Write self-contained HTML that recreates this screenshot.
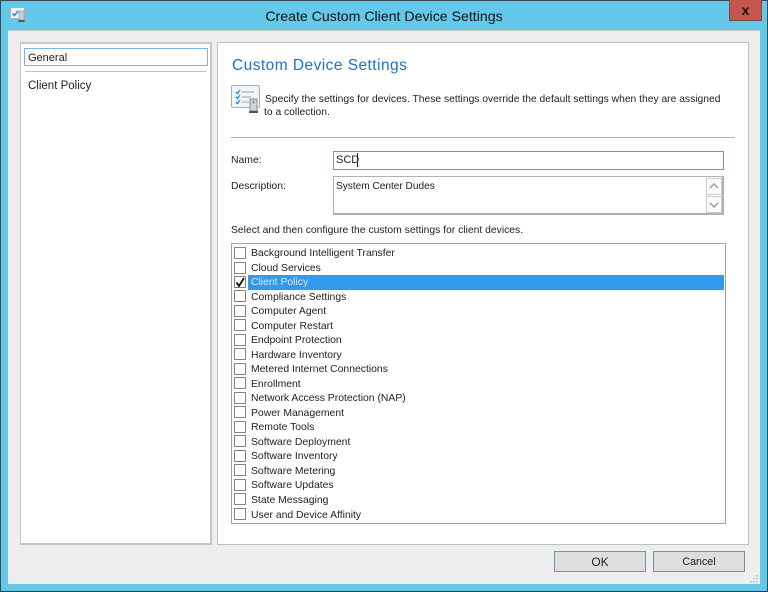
<!DOCTYPE html>
<html><head><meta charset="utf-8"><style>
html,body{margin:0;padding:0}
body{width:768px;height:592px;overflow:hidden;position:relative;background:#64c8ea;font-family:"Liberation Sans",sans-serif;font-size:10.4px;color:#222}
div,span{position:absolute;box-sizing:border-box;white-space:nowrap}
.t{line-height:14px;height:14px}
.cb{left:234px;width:12px;height:12px;margin-top:1px;background:#fff;border:1px solid #858585}
.l{left:251px;line-height:14px;height:14px;margin-top:2px}
</style></head><body>
<div style="left:0;top:0;width:768px;height:1px;background:#3a4a50"></div>
<div style="left:0;top:591px;width:768px;height:1px;background:#2e3c42"></div>
<div style="left:0;top:0;width:1px;height:592px;background:#3a4a50"></div>
<div style="left:767px;top:0;width:1px;height:592px;background:#3a4a50"></div>
<svg style="position:absolute;left:9px;top:6px" width="18" height="18" viewBox="0 0 18 18"><rect x="1.500" y="1.500" width="14" height="11" rx="1" fill="#f1f5f7" stroke="#a9b4ba"/><path d="M3.500 7.500l2 2 3.500-4.500" fill="none" stroke="#2f8fe0" stroke-width="1.600"/><rect x="10" y="5" width="5" height="9" fill="#c9cfd2" stroke="#8d9599" stroke-width=".7"/><rect x="9.500" y="14" width="6" height="2" fill="#555"/></svg>
<div style="left:0;width:768px;top:8px;text-align:center;font-size:14.150px;line-height:16px;color:#111">Create Custom Client Device Settings</div>
<div style="left:729px;top:0;width:33px;height:21px;background:#c4574c;border:1px solid #7e4a46;border-top:0;text-align:center;font-weight:bold;font-size:14px;line-height:20px;color:#111">x</div>
<div style="left:8px;top:30px;width:752px;height:554px;background:#eee;border-top:1px solid #ccc"></div>
<div style="left:20px;top:42px;width:192px;height:503px;background:#fff;border:2px solid #c6c6c6;border-width:2px 2px 2px 1px"></div>
<div style="left:24px;top:48px;width:184px;height:18px;border:1px solid #7db4ea"></div>
<div class="t" style="left:28px;top:51px;font-size:11px">General</div>
<div style="left:25px;top:71px;width:181px;height:1px;background:#c4c4c4"></div>
<div class="t" style="left:28px;top:79px;font-size:11.500px">Client Policy</div>
<div style="left:217px;top:42px;width:532px;height:503px;background:#fff;border:1px solid #c0c0c0"></div>
<div style="left:232px;top:56px;font-size:15.500px;line-height:19px;color:#1f72c8;letter-spacing:.45px">Custom Device Settings</div>
<svg style="position:absolute;left:231px;top:85px" width="30" height="30" viewBox="0 0 30 30"><rect x=".5" y=".5" width="28" height="22" rx="1.500" fill="#f2f5f7" stroke="#a5aeb3"/><path d="M5 7l1.500 1.500L9 5M5 12l1.500 1.500L9 10M5 17l1.500 1.500L9 15" fill="none" stroke="#2f90e0" stroke-width="1.400"/><path d="M11 7h12M11 12h9M11 17h7" stroke="#9aa3a8"/><rect x="19" y="14" width="7" height="12" fill="#cfd5d8" stroke="#70787c" stroke-width=".8"/><rect x="21.500" y="15.500" width="2" height="3" fill="#6fb13f"/><rect x="18" y="26" width="9" height="2" fill="#555"/></svg>
<div class="t" style="left:265px;top:93px;font-size:10.300px">Specify the settings for devices. These settings override the default settings when they are assigned</div>
<div class="t" style="left:264px;top:106px;font-size:10.300px">to a collection.</div>
<div style="left:231px;top:137px;width:504px;height:1px;background:#b5b5b5"></div>
<div class="t" style="left:231px;top:154px">Name:</div>
<div style="left:333px;top:151px;width:391px;height:19px;border:1px solid #6f97b8"></div>
<div class="t" style="left:336px;top:153px;font-size:11px">SCD</div>
<div style="left:357px;top:153px;width:1px;height:14px;background:#222"></div>
<div class="t" style="left:231px;top:180px">Description:</div>
<div style="left:333px;top:176px;width:391px;height:39px;border:1px solid #b0b0b0;border-bottom-width:2px;border-right-width:2px"></div>
<div class="t" style="left:336px;top:180px;font-size:10.100px">System Center Dudes</div>
<div style="left:706px;top:178px;width:16px;height:17px;border:1px solid #ccc;background:#fbfbfb"></div>
<div style="left:706px;top:196px;width:16px;height:17px;border:1px solid #ccc;background:#fbfbfb"></div>
<svg style="position:absolute;left:706px;top:178px" width="16" height="35" fill="none" stroke="#999" stroke-width="1.400"><path d="M4 10l4-4 4 4M4 25l4 4 4-4"/></svg>
<div class="t" style="left:231px;top:224px;font-size:10.350px">Select and then configure the custom settings for client devices.</div>
<div style="left:231px;top:243px;width:495px;height:281px;border:1px solid #a0a0a8"></div>
<div style="left:248px;top:275px;width:476px;height:15px;background:#3399ea"></div>
<div class="cb" style="top:246px"></div><div class="l" style="top:245px">Background Intelligent Transfer</div>
<div class="cb" style="top:261px"></div><div class="l" style="top:260px">Cloud Services</div>
<div class="cb" style="top:275px"></div><div class="l" style="top:274px;color:#d5ebfb">Client Policy</div>
<svg style="position:absolute;left:234px;top:276px" width="12" height="13"><path d="M2.500 6.500l2.500 3.500 5-8" fill="none" stroke="#111" stroke-width="1.800"/></svg>
<div class="cb" style="top:289px"></div><div class="l" style="top:289px">Compliance Settings</div>
<div class="cb" style="top:304px"></div><div class="l" style="top:303px">Computer Agent</div>
<div class="cb" style="top:318px"></div><div class="l" style="top:318px">Computer Restart</div>
<div class="cb" style="top:333px"></div><div class="l" style="top:332px">Endpoint Protection</div>
<div class="cb" style="top:347px"></div><div class="l" style="top:347px">Hardware Inventory</div>
<div class="cb" style="top:362px"></div><div class="l" style="top:361px">Metered Internet Connections</div>
<div class="cb" style="top:376px"></div><div class="l" style="top:376px">Enrollment</div>
<div class="cb" style="top:391px"></div><div class="l" style="top:390px">Network Access Protection (NAP)</div>
<div class="cb" style="top:405px"></div><div class="l" style="top:405px">Power Management</div>
<div class="cb" style="top:420px"></div><div class="l" style="top:419px">Remote Tools</div>
<div class="cb" style="top:434px"></div><div class="l" style="top:434px">Software Deployment</div>
<div class="cb" style="top:449px"></div><div class="l" style="top:448px">Software Inventory</div>
<div class="cb" style="top:463px"></div><div class="l" style="top:463px">Software Metering</div>
<div class="cb" style="top:478px"></div><div class="l" style="top:477px">Software Updates</div>
<div class="cb" style="top:492px"></div><div class="l" style="top:492px">State Messaging</div>
<div class="cb" style="top:507px"></div><div class="l" style="top:507px">User and Device Affinity</div>
<div style="left:554px;top:551px;width:92px;height:21px;background:#dedede;border:1px solid #5f9cc5;text-align:center;font-size:12px;line-height:20px">OK</div>
<div style="left:653px;top:551px;width:92px;height:21px;background:#dedede;border:1px solid #8a8a8a;text-align:center;font-size:10.700px;line-height:20px">Cancel</div>
<svg style="position:absolute;left:749px;top:574px" width="10" height="10" fill="#b5b5b5"><rect x="7" y="1" width="1.500" height="1.500"/><rect x="4" y="4" width="1.500" height="1.500"/><rect x="7" y="4" width="1.500" height="1.500"/><rect x="1" y="7" width="1.500" height="1.500"/><rect x="4" y="7" width="1.500" height="1.500"/><rect x="7" y="7" width="1.500" height="1.500"/></svg>
</body></html>
